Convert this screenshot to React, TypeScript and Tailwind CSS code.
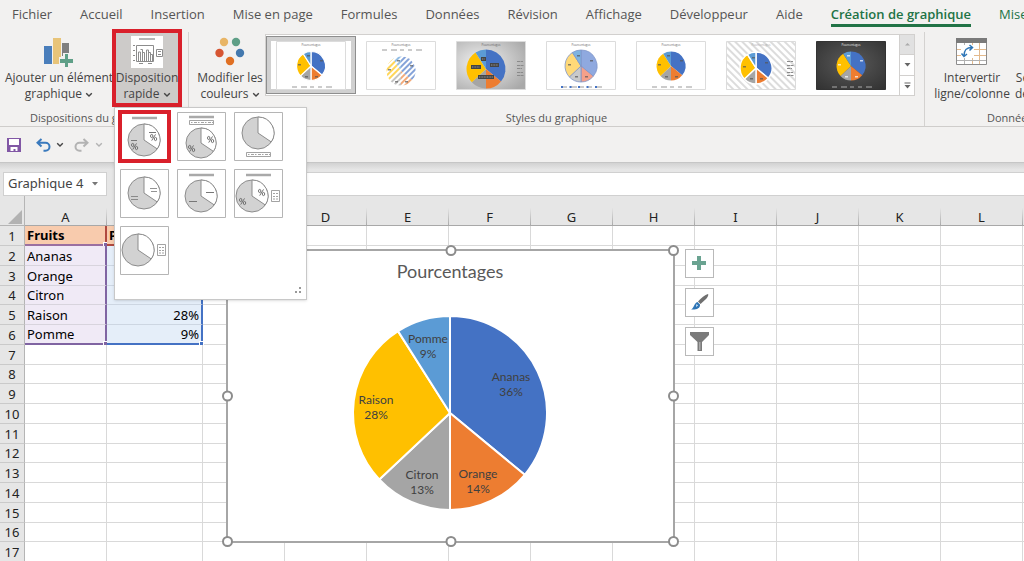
import type { ReactNode } from "react";

type Palette = string[];

const SHARES = [36, 14, 13, 28, 9];
const OFFICE: Palette = ["#4472c4", "#ed7d31", "#a5a5a5", "#ffc000", "#5b9bd5"];
const SOFT: Palette = ["#8fa9df", "#f4a08a", "#c9c9c9", "#ffd978", "#7fb4e0"];

function slicePaths(cx: number, cy: number, r: number) {
  let acc = 0;
  return SHARES.map((share) => {
    const a0 = (acc / 100) * Math.PI * 2;
    acc += share;
    const a1 = (acc / 100) * Math.PI * 2;
    const x0 = (cx + r * Math.sin(a0)).toFixed(2);
    const y0 = (cy - r * Math.cos(a0)).toFixed(2);
    const x1 = (cx + r * Math.sin(a1)).toFixed(2);
    const y1 = (cy - r * Math.cos(a1)).toFixed(2);
    return `M${cx} ${cy}L${x0} ${y0}A${r} ${r} 0 0 1 ${x1} ${y1}Z`;
  });
}

function Pie({ cx, cy, r, fills, gap, line = "#fff" }: { cx: number; cy: number; r: number; fills: Palette; gap: number; line?: string }) {
  return (
    <g stroke={line} strokeWidth={gap} strokeLinejoin="round">
      {slicePaths(cx, cy, r).map((d, i) => (
        <path key={i} d={d} fill={fills[i]} />
      ))}
    </g>
  );
}

function Chevron({ className = "" }: { className?: string }) {
  return (
    <svg className={`inline-block ${className}`} width="8" height="6" viewBox="0 0 8 6" fill="none" stroke="currentColor" strokeWidth="1.4" aria-hidden="true">
      <path d="M1.2 1.2 4 4l2.8-2.8" />
    </svg>
  );
}

/* ---------- Ribbon tabs ---------- */

const TABS = ["Fichier", "Accueil", "Insertion", "Mise en page", "Formules", "Données", "Révision", "Affichage", "Développeur", "Aide"];

function RibbonTabs() {
  return (
    <nav className="flex h-8 items-start gap-7 overflow-hidden pl-3 pt-1 font-['Open_Sans',sans-serif] text-[13px] leading-5 whitespace-nowrap text-[#555]">
      {TABS.map((t) => (
        <button key={t} type="button" className="shrink-0">
          {t}
        </button>
      ))}
      <button type="button" className="shrink-0 border-b-3 border-[#217346] font-semibold text-[#217346]">
        Création de graphique
      </button>
      <button type="button" className="shrink-0 text-[#217346]">
        Mise en forme
      </button>
    </nav>
  );
}

/* ---------- Ribbon icons ---------- */

function AddElementIcon() {
  return (
    <svg width="32" height="30" viewBox="0 0 32 30" aria-hidden="true">
      <path fill="#4a7ebb" d="M1 9h8v18H1z" />
      <path fill="#e8c479" d="M10 1h8v26h-8z" />
      <path fill="#7f7f7f" d="M19 6h7v13h-7z" />
      <path fill="#f1f0ef" d="M20 16h6v-1h1v6h4v6h-4v3h-7v-3h-4v-7h4z" />
      <path fill="#5f9f87" d="M22 17h3v5h5v4h-5v5h-3v-5h-5v-4h5z" />
    </svg>
  );
}

function QuickLayoutIcon() {
  return (
    <svg width="32" height="32" viewBox="0 0 32 32" aria-hidden="true">
      <path fill="#fff" d="M0 0h32v32H0z" />
      <path fill="#b5b5b5" d="M8 2h16v2H8z" />
      <g fill="none" stroke="#8c8c8c">
        <path d="M5.500 9.500h17v16h-17zM2 9.500h2M2 14.500h2M2 19.500h2M2 24.500h2M8 27.500h4M17 27.500h4" />
        <path d="M7.500 25v-9h2v9M9.500 13.500h2v11.500M11.500 16.500h2v8.500M15.500 25v-11h2v11M17.500 16.500h2v8.500M19.500 18.500h2v6.500" />
        <path d="M25.500 13.500h6v7h-6zM27 15.500h3M27 18.500h3" />
      </g>
    </svg>
  );
}

function ColorsIcon() {
  return (
    <svg width="30" height="30" viewBox="0 0 30 30" aria-hidden="true">
      <circle cx="9" cy="5" r="4.200" fill="#e8b566" />
      <circle cx="21" cy="5" r="4.200" fill="#5f9f87" />
      <circle cx="4.500" cy="16" r="4.200" fill="#d65532" />
      <circle cx="25" cy="16" r="4.200" fill="#4479ae" />
      <circle cx="15" cy="24" r="4.200" fill="#e07023" />
    </svg>
  );
}

function SwapIcon() {
  return (
    <svg width="32" height="28" viewBox="0 0 32 28" fill="none" aria-hidden="true">
      <path fill="#fff" stroke="#8c8c8c" d="M.5.5h30v26H.5z" />
      <path fill="#7a7a7a" d="M0 0h31v5H0z" />
      <path stroke="#e3b98c" d="M1 11.500h29M1 17.500h29M16.500 5v21M23.500 5v21" />
      <path stroke="#b0b0b0" d="M8.500 5v21M1 22.500h29" />
      <path fill="#fff" d="M5 7h13v13H5z" />
      <path stroke="#2e75b6" strokeWidth="1.500" d="M8 18C8 12 10 9.500 16 9.500M13.500 7l3 2.500-3 3M5.500 15.500 8 18.500l3-2.500" />
    </svg>
  );
}

/* ---------- Chart style gallery ---------- */

type ThumbKind = "plain" | "hatch" | "silver" | "soft" | "clean" | "striped" | "dark";

function StyleThumb({ kind }: { kind: ThumbKind }) {
  const dark = kind === "dark";
  const title = dark ? "#eee" : kind === "striped" ? "#aaa" : "#666";
  const bg = kind === "silver" ? "url(#silver)" : dark ? "url(#night)" : kind === "striped" ? "url(#diag)" : "#fff";
  const isTop = kind === "hatch";
  const isSide = kind === "silver" || kind === "striped";
  const cx = isSide ? 30 : 35;
  const cy = kind === "silver" ? 28 : isTop ? 30 : kind === "striped" ? 27 : 25;
  const r = kind === "silver" ? 19.5 : kind === "soft" || kind === "striped" ? 16 : 14.5;
  const legendY = isTop ? 9 : 46;
  return (
    <svg width="70" height="49" viewBox="0 0 70 49" aria-hidden="true">
      <defs>
        <radialGradient id="silver" cx="35%" cy="45%" r="75%">
          <stop offset="0" stopColor="#f2f2f2" />
          <stop offset="1" stopColor="#a9a9a9" />
        </radialGradient>
        <radialGradient id="night" cx="50%" cy="45%" r="70%">
          <stop offset="0" stopColor="#5a5a5a" />
          <stop offset="1" stopColor="#333" />
        </radialGradient>
        <pattern id="diag" width="5" height="5" patternUnits="userSpaceOnUse" patternTransform="rotate(-45)">
          <path fill="#fff" d="M0 0h5v5H0z" />
          <path fill="#dcdcdc" d="M0 0h2v5H0z" />
        </pattern>
        <pattern id="strokes" width="4" height="4" patternUnits="userSpaceOnUse" patternTransform="rotate(45)">
          <path fill="#fff" fillOpacity=".35" d="M0 0h4v4H0z" />
          <path fill="#fff" d="M0 0h2v4H0z" />
        </pattern>
      </defs>
      <path d="M.5.5h69v48H.5z" fill={bg} stroke={dark ? "#333" : "#dcdcdc"} />
      <text x="35" y="5" textAnchor="middle" fontSize="3" fill={title}>
        Pourcentages
      </text>
      <Pie cx={cx} cy={cy} r={r} fills={kind === "soft" ? SOFT : OFFICE} gap={kind === "plain" ? 1.2 : kind === "striped" ? 1.4 : kind === "soft" ? 0.8 : 0.2} line={kind === "soft" ? "#7f96c9" : kind === "plain" || kind === "striped" ? "#fff" : "none"} />
      {kind === "hatch" && <circle cx={cx} cy={cy} r={r + 1} fill="url(#strokes)" />}
      {kind === "silver" ? (
        <g fill="#444">
          <path d="M34 22h9v4h-9zM25 16h5v4h-5zM15 24h10v4H15zM22 34h16v4H22z" />
          <path stroke="#bbb" strokeWidth=".7" strokeDasharray="1 .6" d="M35 24h7M26 18h3M16 26h8M23 36h14" />
        </g>
      ) : (
        <g fill={dark ? "#fff" : "#555"} opacity=".7">
          <path d={`M${cx + 9} ${cy - 6}h3v1.500h-3zM${cx + 4} ${cy + 10}h3v1.500h-3zM${cx - 6} ${cy + 10}h3v1.500h-3zM${cx - 13} ${cy - 2}h3v1.500h-3zM${cx - 4} ${cy - 11}h3v1.500h-3z`} />
        </g>
      )}
      {isSide ? (
        <path stroke="#8a8a8a" strokeWidth="1" strokeDasharray="3 .5" d="M61 20.500h6M61 24.500h7M61 27.500h5M61 31.500h6M61 34.500h7" />
      ) : (
        <path stroke={dark ? "#aaa" : "#999"} strokeWidth="1" d={`M16 ${legendY}h5m4 0h6m3 0h4m4 0h4m4 0h6`} />
      )}
      {kind === "soft" && <path stroke="#4472c4" strokeWidth="2" strokeDasharray="2 6.500" d="M15 46h38" />}
    </svg>
  );
}

const THUMBS: ThumbKind[] = ["plain", "hatch", "silver", "soft", "clean", "striped", "dark"];

function StyleGallery() {
  return (
    <div className="flex h-[62px] border border-[#d2d0ce] bg-white">
      {THUMBS.map((k, i) => (
        <button
          key={k}
          type="button"
          aria-label={`Style ${i + 1}`}
          className={
            i === 0
              ? "mt-px flex h-[58px] w-[90px] items-center justify-center border border-[#8e8e8e] bg-white ring-4 ring-[#d0d0d0] ring-inset"
              : "mt-px flex h-[58px] w-[90px] items-center justify-center"
          }
        >
          <StyleThumb kind={k} />
        </button>
      ))}
      <div className="ml-auto flex w-[15px] flex-col border-l border-[#d2d0ce] text-[#666]">
        {["M2 4.500 4.500 2 7 4.500z", "M1.500 2h6L4.500 5.500z", "M1.500 4h6L4.500 7.500zM1.500 1.500h6v1h-6z"].map((d, i) => (
          <button key={d} type="button" aria-label={["Précédent", "Suivant", "Autres"][i]} className={i === 0 ? "flex flex-1 items-center justify-center bg-[#e1e1e1] text-[#aaa]" : "flex flex-1 items-center justify-center border-t border-[#d2d0ce]"}>
            <svg width="9" height="8" viewBox="0 0 9 8" fill="currentColor" aria-hidden="true">
              <path d={d} />
            </svg>
          </button>
        ))}
      </div>
    </div>
  );
}

/* ---------- Quick layout menu ---------- */

type LayoutSpec = { title?: boolean; cx: number; cy: number; r: number; marks?: "both" | "percent" | "names" | "line"; legend?: "top" | "bottom" | "right" };

const LAYOUTS: LayoutSpec[] = [
  { title: true, cx: 24, cy: 28, r: 16, marks: "both" },
  { title: true, cx: 24, cy: 31, r: 15, marks: "percent", legend: "top" },
  { cx: 24, cy: 21, r: 16, legend: "bottom" },
  { cx: 24, cy: 24, r: 16, marks: "names" },
  { title: true, cx: 24, cy: 27, r: 16, marks: "line" },
  { title: true, cx: 18, cy: 27, r: 16, marks: "percent", legend: "right" },
  { cx: 18, cy: 24, r: 16, legend: "right" },
];

function PercentMark({ x, y }: { x: number; y: number }) {
  return (
    <g transform={`translate(${x} ${y})`} stroke="#666" strokeWidth=".9">
      <ellipse cx="1.700" cy="2" rx="1.200" ry="1.600" />
      <ellipse cx="5.500" cy="5" rx="1.200" ry="1.600" />
      <path d="M5.500.4 1.700 6.600" />
    </g>
  );
}

function LayoutThumb({ spec }: { spec: LayoutSpec }) {
  const { title, cx, cy, r, marks, legend } = spec;
  const ex = cx + r * 0.83;
  const ey = cy + r * 0.56;
  const barY = legend === "top" ? 9 : 41;
  const percentY = marks === "both" ? cy - 6 : cy - 7;
  return (
    <svg width="49" height="49" viewBox="0 0 49 49" fill="none" stroke="#8c8c8c" aria-hidden="true">
      <path fill="#fff" stroke="#b5b5b5" d="M.5.500h48v48H.5z" />
      {title && <path stroke="#a9a9a9" strokeWidth="2.500" d={`M12 ${legend === "top" ? 5 : 6}h25`} />}
      <circle cx={cx} cy={cy} r={r} fill="#d2d2d2" />
      <path fill="#fff" d={`M${cx} ${cy}V${cy - r}A${r} ${r} 0 0 1 ${ex} ${ey}Z`} />
      {(marks === "both" || marks === "percent") && (
        <>
          <PercentMark x={cx + 6} y={percentY} />
          <PercentMark x={cx - 13} y={percentY + 9} />
        </>
      )}
      {marks === "both" && <path stroke="#777" d={`M${cx + 5} ${cy - 7.5}h7M${cx - 13} ${cy + 0.5}h6`} />}
      {marks === "names" && <path stroke="#777" strokeWidth=".8" d={`M${cx + 6} ${cy - 4.5}h7m-6 3h6M${cx - 13} ${cy + 3.5}h7m-7 3h7`} />}
      {marks === "line" && <path stroke="#777" d={`M${cx + 5} ${cy - 3.5}h8M${cx - 12} ${cy + 5.5}h8`} />}
      {(legend === "top" || legend === "bottom") && (
        <>
          <path strokeWidth=".8" d={`M12.500 ${barY - 0.5}h24v4h-24z`} />
          <path strokeWidth=".8" strokeDasharray="1.500 1.500 3 1" d={`M14 ${barY + 1.5}h22`} />
        </>
      )}
      {legend === "right" && <path strokeWidth=".8" d={`M37.500 ${cy - 5.5}h8v11h-8zM39 ${cy - 2.5}h2m1 0h2M39 ${cy + 0.5}h2m1 0h2M39 ${cy + 3}h2m1 0h2`} />}
    </svg>
  );
}

function QuickLayoutMenu() {
  return (
    <div className="absolute top-full left-[2px] z-30 flex h-[193px] w-[193px] flex-col border border-[#c8c8c8] bg-white p-1 pl-[5px] shadow-sm">
      <div className="grid w-max grid-cols-3 gap-x-2 gap-y-2">
        {LAYOUTS.map((spec, i) => (
          <button key={i} type="button" aria-label={`Disposition ${i + 1}`} className={i === 0 ? "relative outline-4 -outline-offset-2 outline-[#d9202b]" : "relative"}>
            <LayoutThumb spec={spec} />
          </button>
        ))}
      </div>
      <svg className="mt-auto ml-auto" width="8" height="8" viewBox="0 0 8 8" fill="#999" aria-hidden="true">
        <path d="M5 0h2v2H5zM5 4h2v2H5zM1 4h2v2H1z" />
      </svg>
    </div>
  );
}

/* ---------- Ribbon ---------- */

function BigButton({ icon, children, className }: { icon: ReactNode; children: ReactNode; className: string }) {
  return (
    <button type="button" className={`flex shrink-0 flex-col items-center text-center text-[12px] leading-4 whitespace-nowrap text-[#444] ${className}`}>
      <span className="flex h-9 items-center">{icon}</span>
      <span>{children}</span>
    </button>
  );
}

function Ribbon() {
  return (
    <section className="flex h-[95px] border-b border-[#cfcdcb] font-['Open_Sans',sans-serif]">
      <div className="relative flex w-[189px] shrink-0 flex-col border-r border-[#d4d2d0]">
        <div className="flex">
          <BigButton className="w-[112px] pt-[2px] pl-[6px]" icon={<AddElementIcon />}>
            Ajouter un élément
            <br />
            graphique <Chevron />
          </BigButton>
          <div className="relative -mt-[3px] w-[70px] shrink-0">
            <BigButton className="h-[78px] w-full border-4 border-[#d9202b] bg-[#cdcbc9] pt-px" icon={<QuickLayoutIcon />}>
              Disposition
              <br />
              rapide <Chevron />
            </BigButton>
            <QuickLayoutMenu />
          </div>
        </div>
        <p className="mt-auto w-[158px] self-end overflow-hidden text-[11px] leading-4 whitespace-nowrap text-[#555]">Dispositions du graphique</p>
      </div>
      <div className="flex min-w-0 flex-1 flex-col border-r border-[#d4d2d0]">
        <div className="flex">
          <BigButton className="w-[76px] pt-[2px] pl-[6px]" icon={<ColorsIcon />}>
            Modifier les
            <br />
            couleurs <Chevron />
          </BigButton>
          <div className="mr-[9px] min-w-0 flex-1 pt-[2px]">
            <StyleGallery />
          </div>
        </div>
        <p className="mt-auto text-center text-[11px] leading-4 text-[#555]">Styles du graphique</p>
      </div>
      <div className="flex w-[99px] shrink-0 flex-col overflow-hidden">
        <div className="flex gap-1 pl-2">
          <BigButton className="w-[78px] pt-[2px]" icon={<SwapIcon />}>
            Intervertir
            <br />
            ligne/colonne
          </BigButton>
          <BigButton className="pt-[2px]" icon={null}>
            Sélectionner
            <br />
            des données
          </BigButton>
        </div>
        <p className="mt-auto pl-[62px] text-[11px] leading-4 text-[#555]">Données</p>
      </div>
    </section>
  );
}

function QuickAccess() {
  return (
    <div className="flex h-9 items-center border-b border-[#c6c6c6] pl-[7px] text-[#444]">
      <button type="button" aria-label="Enregistrer">
        <svg width="14" height="14" viewBox="0 0 14 14" aria-hidden="true">
          <path fill="#8157a5" d="M0 0h14v14H0z" />
          <path fill="#fff" d="M2 1h10v6H2zM3.500 9h7v4h-2v-2h-2v2h-3z" />
        </svg>
      </button>
      <button type="button" aria-label="Annuler" className="ml-[15px] text-[#3a7abd]">
        <svg width="15" height="14" viewBox="0 0 15 14" fill="none" stroke="currentColor" strokeWidth="2" aria-hidden="true">
          <path d="M5.500 1 1.500 4.700l4 3.800M2 4.700h7.500a4 4 0 0 1 0 8H7.500" />
        </svg>
      </button>
      <Chevron className="ml-[5px]" />
      <button type="button" aria-label="Rétablir" className="ml-[10px] text-[#b3b3b3]">
        <svg width="15" height="14" viewBox="0 0 15 14" fill="none" stroke="currentColor" strokeWidth="2" aria-hidden="true">
          <path d="m9.500 1 4 3.700-4 3.800M13 4.700H5.500a4 4 0 0 0 0 8h2" />
        </svg>
      </button>
      <Chevron className="ml-[6px] text-[#b3b3b3]" />
    </div>
  );
}

function FormulaBar() {
  return (
    <div className="flex h-[33px] items-end gap-2 bg-linear-to-b from-[#d2d2d2] to-[#e6e6e6] to-20%">
      <div className="ml-[3px] flex h-6 w-[104px] items-center border border-[#d0d0d0] bg-white">
        <input aria-label="Zone Nom" defaultValue="Graphique 4" className="w-[88px] bg-transparent pl-1 text-[13px] text-[#444] outline-none" />
        <svg width="6" height="4" viewBox="0 0 6 4" fill="#777" aria-hidden="true">
          <path d="M0 0h6L3 3.500z" />
        </svg>
      </div>
      <input aria-label="Barre de formule" className="h-6 min-w-0 flex-1 border-y border-[#d0d0d0] bg-white px-2 text-[13px] outline-none" />
    </div>
  );
}

/* ---------- Worksheet ---------- */

const COLUMNS = ["A", "B", "C", "D", "E", "F", "G", "H", "I", "J", "K", "L"];
const DATA: [string, string][] = [
  ["Fruits", "Pourcentages"],
  ["Ananas", "36%"],
  ["Orange", "14%"],
  ["Citron", "13%"],
  ["Raison", "28%"],
  ["Pomme", "9%"],
];

function colorA(row: number) {
  if (row === 1) return "border-r-2 border-b-2 border-r-[#b0493f] border-b-[#9a6fa0] bg-[#f8cbad] font-bold";
  if (row < 6) return "border-r-2 border-b border-r-[#8064a2] border-b-[#d8d4dd] bg-[#f0eaf6]";
  if (row === 6) return "border-r-2 border-b-2 border-[#8064a2] bg-[#f0eaf6]";
  return "border-r border-b border-[#d9d9d9]";
}

function colorB(row: number) {
  if (row === 1) return "border-r-2 border-b-2 border-[#b0493f] bg-[#f8cbad] text-left font-bold";
  if (row < 6) return "border-r-2 border-b border-r-[#4472c4] border-b-[#cdd6e2] bg-[#e5eef9] text-right";
  if (row === 6) return "border-r-2 border-b-2 border-[#4472c4] bg-[#e5eef9] text-right";
  return "border-r border-b border-[#d9d9d9]";
}

function Grid() {
  return (
    <table className="w-full table-fixed border-separate border-spacing-0 text-[13px] leading-4 text-[#222]">
      <colgroup>
        <col className="w-[25px]" />
        <col className="w-[82px]" />
        <col className="w-[96px]" />
        {COLUMNS.slice(2).map((c) => (
          <col key={c} className="w-[82px]" />
        ))}
        <col />
      </colgroup>
      <thead>
        <tr className="h-[30px]">
          <th scope="col" aria-label="Tout sélectionner" className="border-r border-b border-[#b5b5b5] bg-[#e6e6e6] p-0">
            <svg className="mt-3 ml-2" width="14" height="14" viewBox="0 0 14 14" fill="#b2b2b2" aria-hidden="true">
              <path d="M14 0v14H0z" />
            </svg>
          </th>
          {COLUMNS.map((c) => (
            <th key={c} scope="col" className="border-b border-[#a8a8a8] bg-linear-to-t from-[#ababab] to-[#e6e6e6] to-60% p-0 font-normal">
              <span className="mr-px flex h-[29px] items-end justify-center bg-[#e6e6e6]">{c}</span>
            </th>
          ))}
          <th className="border-b border-[#a8a8a8] bg-[#e6e6e6] p-0" />
        </tr>
      </thead>
      <tbody>
        {Array.from({ length: 17 }, (_, i) => {
          const row = i + 1;
          return (
            <tr key={row} className={row % 4 === 0 ? "h-[19px]" : "h-5"}>
              <th scope="row" className="border-r border-b border-r-[#b5b5b5] border-b-[#cacaca] bg-[#e6e6e6] p-0 font-normal">
                {row}
              </th>
              <td className={`relative p-0 pl-[2px] text-black ${colorA(row)}`}>
                {DATA[i]?.[0]}
                {(row === 1 || row === 6) && <span className="absolute -right-[3px] -bottom-[3px] size-[5px] border border-white bg-[#8064a2]" />}
              </td>
              <td className={`relative p-0 px-[2px] text-black ${colorB(row)}`}>
                {DATA[i]?.[1]}
                {row === 6 && <span className="absolute -right-[3px] -bottom-[3px] size-[5px] border border-white bg-[#4472c4]" />}
              </td>
              {COLUMNS.slice(2).map((c) => (
                <td key={c} className="border-r border-b border-[#d9d9d9] p-0" />
              ))}
              <td className="border-b border-[#d9d9d9] p-0" />
            </tr>
          );
        })}
      </tbody>
    </table>
  );
}

const LABELS = [
  { name: "Ananas", value: "36%", x: 283, y: 130 },
  { name: "Orange", value: "14%", x: 250, y: 227 },
  { name: "Citron", value: "13%", x: 194, y: 228 },
  { name: "Raison", value: "28%", x: 148, y: 153 },
  { name: "Pomme", value: "9%", x: 200, y: 92 },
];

const HANDLES = ["-top-[6px] -left-[6px]", "-top-[6px] left-1/2 -translate-x-1/2", "-top-[6px] -right-[6px]", "top-1/2 -left-[6px] -translate-y-1/2", "top-1/2 -right-[6px] -translate-y-1/2", "-bottom-[6px] -left-[6px]", "-bottom-[6px] left-1/2 -translate-x-1/2", "-right-[6px] -bottom-[6px]"];

function ChartObject() {
  return (
    <div className="absolute top-[53px] left-[226px] z-10 flex items-start">
      <figure className="relative border-2 border-[#a6a6a6] bg-white">
        <svg className="block" width="445" height="290" viewBox="0 0 445 290" role="img" aria-label="Pourcentages">
          <text x="222" y="27" textAnchor="middle" fontSize="18" fill="#595959" className="font-['Lato',sans-serif]">
            Pourcentages
          </text>
          <Pie cx={222} cy={162} r={97} fills={OFFICE} gap={2} />
          <g textAnchor="middle" fontSize="12" fill="#404040" className="font-['Lato',sans-serif]">
            {LABELS.map((l) => (
              <text key={l.name} x={l.x} y={l.y}>
                {l.name}
                <tspan x={l.x} dy="15">
                  {l.value}
                </tspan>
              </text>
            ))}
          </g>
        </svg>
        {HANDLES.map((h) => (
          <span key={h} className={`absolute size-[11px] rounded-full border-2 border-[#8c8c8c] bg-white ${h}`} />
        ))}
      </figure>
      <div className="ml-[10px] flex flex-col gap-[10px]">
        <ChartTool label="Éléments de graphique">
          <path fill="#6aa391" d="M6 1h4v5h5v4h-5v5H6v-5H1V6h5z" />
        </ChartTool>
        <ChartTool label="Styles du graphique">
          <path fill="#6f6f6f" d="M17 0c1 1-1 4-2 5L9.500 10 7 7.500C10 4 14 1 17 0z" />
          <path fill="#2e75b6" d="M6.500 8 9 10.500c.5 4-4 5.500-9 5 3-1 3-6.500 6.500-7.500z" />
          <path fill="#dceaf7" d="M5.500 10 7 11.500l-2 1.500z" />
        </ChartTool>
        <ChartTool label="Filtres du graphique">
          <path fill="#7a7a7a" d="M-1-1h19v3l-7 7v9H6.500V9L-1 2z" />
          <path fill="#aaa" d="M8 9h1.500v8H8z" />
        </ChartTool>
      </div>
    </div>
  );
}

function ChartTool({ label, children }: { label: string; children: ReactNode }) {
  return (
    <button type="button" aria-label={label} className="flex size-[29px] items-center justify-center border border-[#b9b9b9] bg-white">
      <svg className="overflow-visible" width="17" height="17" viewBox="0 0 17 17" aria-hidden="true">
        {children}
      </svg>
    </button>
  );
}

export default function App() {
  return (
    <div className="flex h-screen flex-col overflow-hidden bg-[#f2f1f0] font-['Noto_Sans',sans-serif]">
      <RibbonTabs />
      <Ribbon />
      <QuickAccess />
      <FormulaBar />
      <main className="relative min-h-0 flex-1 overflow-hidden bg-white">
        <Grid />
        <ChartObject />
      </main>
    </div>
  );
}
